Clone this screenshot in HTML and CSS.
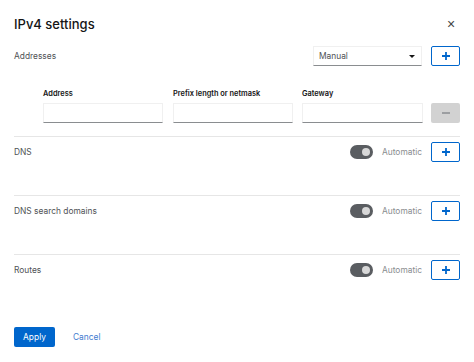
FILE: index.html
```html
<!doctype html>
<html>
  <head>
    <meta charset="UTF-8" />
    <title>IPv4 settings</title>
    <link rel="stylesheet" href="styles.css">
  </head>
  <body>
    <div class="modal">
      <div class="modal-header">
        <h1>IPv4 settings</h1>
        <button class="close" aria-label="Close">&times;</button>
      </div>

      <!-- Addresses -->
      <div class="section addresses">
        <div class="section-row">
          <div class="section-label">Addresses</div>
          <div class="section-actions">
            <div class="select">
              <span>Manual</span>
              <span class="caret"></span>
            </div>
            <button class="btn-icon">
              <svg viewBox="0 0 10 10" width="10" height="10"><path d="M5 1v8M1 5h8" /></svg>
            </button>
          </div>
        </div>
        <div class="address-grid">
          <div class="field">
            <label>Address</label>
            <input type="text" />
          </div>
          <div class="field">
            <label>Prefix length or netmask</label>
            <input type="text" />
          </div>
          <div class="field">
            <label>Gateway</label>
            <input type="text" />
          </div>
          <button class="btn-remove">
            <svg viewBox="0 0 10 10" width="10" height="10"><path d="M1 5h8" /></svg>
          </button>
        </div>
      </div>

      <!-- DNS -->
      <div class="section">
        <div class="section-row">
          <div class="section-label">DNS</div>
          <div class="section-actions">
            <div class="switch"><span class="knob"></span></div>
            <span class="switch-label">Automatic</span>
            <button class="btn-icon">
              <svg viewBox="0 0 10 10" width="10" height="10"><path d="M5 1v8M1 5h8" /></svg>
            </button>
          </div>
        </div>
      </div>

      <!-- DNS search domains -->
      <div class="section">
        <div class="section-row">
          <div class="section-label">DNS search domains</div>
          <div class="section-actions">
            <div class="switch"><span class="knob"></span></div>
            <span class="switch-label">Automatic</span>
            <button class="btn-icon">
              <svg viewBox="0 0 10 10" width="10" height="10"><path d="M5 1v8M1 5h8" /></svg>
            </button>
          </div>
        </div>
      </div>

      <!-- Routes -->
      <div class="section last">
        <div class="section-row">
          <div class="section-label">Routes</div>
          <div class="section-actions">
            <div class="switch"><span class="knob"></span></div>
            <span class="switch-label">Automatic</span>
            <button class="btn-icon">
              <svg viewBox="0 0 10 10" width="10" height="10"><path d="M5 1v8M1 5h8" /></svg>
            </button>
          </div>
        </div>
      </div>

      <div class="modal-footer">
        <button class="primary">Apply</button>
        <button class="link">Cancel</button>
      </div>
    </div>
  </body>
</html>
```

FILE: styles.css
```css
body {
  font-family: Inter, "Open Sans", sans-serif;
  margin: 0;
  padding: 0;
  background-color: #fff;
  color: #3c3f42;
  font-size: 8.4px;
}

.modal {
  width: 446px;
  padding: 0 14px;
}

.modal-header {
  display: flex;
  justify-content: space-between;
  align-items: center;
  height: 46px;
  padding-top: 1px;
  box-sizing: border-box;
}

.modal-header h1 {
  margin: 0;
  font-size: 13px;
  font-weight: 500;
  color: #151515;
}

.close {
  background: none;
  border: none;
  padding: 0;
  font-size: 14px;
  line-height: 1;
  color: #444;
  width: 14px;
  margin-right: 2px;
  cursor: pointer;
}

.section {
  border-bottom: 1px solid #e6e6e6;
  padding-bottom: 33px;
  margin-bottom: 5px;
}

.section.addresses {
  padding-bottom: 13px;
}

.section.last {
  border-bottom: none;
  padding-bottom: 0;
  margin-bottom: 0;
}

.section-row {
  display: flex;
  justify-content: space-between;
  align-items: center;
  height: 20px;
}

.section-label {
  color: #4f5255;
}

.section-actions {
  display: flex;
  align-items: center;
}

.select {
  display: flex;
  justify-content: space-between;
  align-items: center;
  width: 109px;
  height: 20px;
  box-sizing: border-box;
  padding: 0 6px 0 5px;
  border: 1px solid #f0f0f0;
  border-bottom-color: #8a8d90;
  color: #4f5255;
}

.caret {
  width: 0;
  height: 0;
  border-left: 3px solid transparent;
  border-right: 3px solid transparent;
  border-top: 3px solid #151515;
}

.btn-icon {
  width: 29px;
  height: 20px;
  margin-left: 9px;
  padding: 0;
  border: 1px solid #06c;
  border-radius: 2px;
  background: #fff;
  display: flex;
  align-items: center;
  justify-content: center;
  cursor: pointer;
}

.btn-icon path {
  stroke: #06c;
  stroke-width: 1.8;
  fill: none;
}

.address-grid {
  display: grid;
  grid-template-columns: 120px 120px 120px 29px;
  column-gap: 10px;
  padding-left: 29px;
  margin-top: 23px;
  align-items: end;
}

.address-grid .field:nth-child(3) {
  margin-left: -1px;
}

.field label {
  display: block;
  font-size: 7.4px;
  font-weight: 600;
  color: #151515;
  margin-bottom: 5px;
}

.field input {
  display: block;
  width: 100%;
  height: 20px;
  box-sizing: border-box;
  border: 1px solid #f0f0f0;
  border-bottom-color: #8a8d90;
  margin: 0;
}

.btn-remove {
  width: 29px;
  height: 20px;
  margin-left: -2px;
  padding: 0;
  border: none;
  border-radius: 2px;
  background: #d2d2d2;
  display: flex;
  align-items: center;
  justify-content: center;
}

.btn-remove path {
  stroke: #8a8d90;
  stroke-width: 1.5;
  fill: none;
}

.switch {
  width: 23px;
  height: 14px;
  border-radius: 7px;
  background: #5a5d61;
  position: relative;
}

.knob {
  position: absolute;
  top: 3px;
  right: 3px;
  width: 8px;
  height: 8px;
  border-radius: 50%;
  background: #d8d8d8;
}

.switch-label {
  margin-left: 9px;
  color: #8a8d90;
}

.modal-footer {
  display: flex;
  align-items: center;
  margin-top: 47px;
}

button.primary {
  width: 41px;
  height: 20px;
  padding: 0;
  border: none;
  border-radius: 2px;
  background: #06c;
  color: #fff;
  font-family: inherit;
  font-size: 8.4px;
}

button.link {
  margin-left: 18px;
  padding: 0;
  border: none;
  background: none;
  color: #3f7bd0;
  font-family: inherit;
  font-size: 8.4px;
}
```
